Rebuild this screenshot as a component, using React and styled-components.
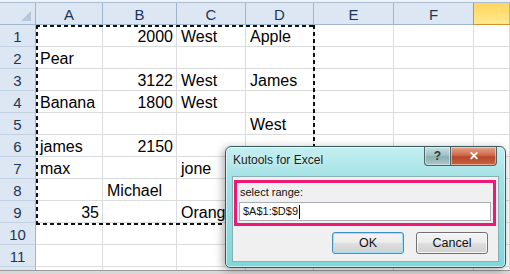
import React from 'react';
import styled, { createGlobalStyle } from 'styled-components';

const GlobalStyle = createGlobalStyle`
  html, body {
    margin: 0;
    padding: 0;
    background: #fff;
  }
`;

const COLS = [
  { key: 'A', width: 67 },
  { key: 'B', width: 74 },
  { key: 'C', width: 69 },
  { key: 'D', width: 68 },
  { key: 'E', width: 80 },
  { key: 'F', width: 80 },
  { key: 'G', width: 36, selected: true },
];

// cell values, right aligned when numeric
const DATA = {
  1: { B: '2000', C: 'West', D: 'Apple' },
  2: { A: 'Pear' },
  3: { B: '3122', C: 'West', D: 'James' },
  4: { A: 'Banana', B: '1800', C: 'West' },
  5: { D: 'West' },
  6: { A: 'james', B: '2150' },
  7: { A: 'max', C: 'jone' },
  8: { B: 'Michael' },
  9: { A: '35', C: 'Orange' },
};

const Page = styled.div`
  position: relative;
  width: 510px;
  height: 274px;
  overflow: hidden;
  background: #fff;
  font-family: "Liberation Sans", Arial, sans-serif;
`;

const Sheet = styled.div`
  position: relative;
  height: 270px;
  overflow: hidden;
  border-bottom: 1px solid #9a9a9a;
`;

const TopStrip = styled.div`
  height: 2px;
  background: #eef1f5;
  border-bottom: 1px solid #a9bdd3;
`;

const Grid = styled.div`
  display: grid;
  grid-template-columns: 36px ${COLS.map((c) => c.width + 'px').join(' ')};
  grid-auto-rows: 22px;
`;

const Corner = styled.div`
  position: relative;
  background: #dde7f3;
  border-right: 1px solid #9eb6ce;
  border-bottom: 1px solid #9eb6ce;
  &::after {
    content: '';
    position: absolute;
    right: 4px;
    bottom: 3px;
    border-left: 10px solid transparent;
    border-bottom: 10px solid #b7c7da;
  }
`;

const ColHeader = styled.div`
  display: flex;
  align-items: center;
  justify-content: center;
  font-size: 15px;
  color: #1c3656;
  background: ${(p) => (p.$selected ? 'linear-gradient(#ffd560, #ffe98e)' : '#dde7f3')};
  border-right: 1px solid #9eb6ce;
  border-bottom: 1px solid ${(p) => (p.$selected ? '#d8902c' : '#9eb6ce')};
  ${(p) => p.$selected && 'border-left: 1px solid #d8902c; margin-left: -1px;'}
  box-sizing: border-box;
  padding-top: 1px;
`;

const RowHeader = styled.div`
  display: flex;
  align-items: center;
  justify-content: center;
  font-size: 15px;
  color: #1c3656;
  background: #dde7f3;
  border-right: 1px solid #9eb6ce;
  border-bottom: 1px solid #c3d2e3;
  box-sizing: border-box;
  padding-top: 2px;
`;

const Cell = styled.div`
  box-sizing: border-box;
  border-right: 1px solid #dadcdd;
  border-bottom: 1px solid #dadcdd;
  font-size: 16px;
  line-height: 20px;
  padding: 2px 3px 0 4px;
  color: #000;
  white-space: nowrap;
  text-align: ${(p) => (p.$numeric ? 'right' : 'left')};
  overflow: visible;
`;

const Selection = styled.div`
  position: absolute;
  left: 36px;
  top: 25px;
  width: 279px;
  height: 200px;
  pointer-events: none;
  background:
    repeating-linear-gradient(90deg, #111 0 4px, transparent 4px 7px) top left / 100% 2px no-repeat,
    repeating-linear-gradient(90deg, #111 0 4px, transparent 4px 7px) bottom left / 100% 2px no-repeat,
    repeating-linear-gradient(180deg, #111 0 4px, transparent 4px 7px) top left / 2px 100% no-repeat,
    repeating-linear-gradient(180deg, #111 0 4px, transparent 4px 7px) top right / 2px 100% no-repeat;
`;

const BottomBand = styled.div`
  height: 3px;
  background: #d8d8d8;
`;

/* dialog */

const Dialog = styled.div`
  position: absolute;
  left: 225px;
  top: 146px;
  width: 281px;
  height: 122px;
  box-sizing: border-box;
  display: flex;
  flex-direction: column;
  border: 1px solid #37595d;
  border-radius: 6px 6px 5px 5px;
  background: linear-gradient(180deg, #c4eff1 0%, #a4e2e5 25%, #7fd6d9 100%);
  box-shadow: inset 0 0 0 1px rgba(255, 255, 255, 0.55), -2px 2px 8px rgba(0, 0, 0, 0.35);
  font-family: "Liberation Sans", Arial, sans-serif;
`;

const TitleBar = styled.div`
  height: 29px;
  display: flex;
  align-items: flex-start;
  padding: 0 8px 0 7px;
`;

const Title = styled.div`
  flex: 1;
  font-size: 12px;
  color: #1b1b1b;
  padding-top: 6px;
  text-shadow: 0 0 6px rgba(255, 255, 255, 0.9);
`;

const CaptionButton = styled.div`
  height: 19px;
  width: ${(p) => (p.$close ? '46px' : '27px')};
  box-sizing: border-box;
  display: flex;
  align-items: center;
  justify-content: center;
  border: 1px solid #4c6467;
  border-top: none;
  ${(p) => (p.$close ? 'border-left: none;' : '')}
  border-radius: ${(p) => (p.$close ? '0 0 4px 0' : '0 0 0 4px')};
  background: ${(p) =>
    p.$close
      ? 'linear-gradient(180deg, #e6a48c 0%, #d06a4c 45%, #b8472b 55%, #c9643f 100%)'
      : 'linear-gradient(180deg, #c9dfe1 0%, #a3c2c5 45%, #8eb0b3 55%, #a9c7ca 100%)'};
  box-shadow: inset 0 0 0 1px rgba(255, 255, 255, 0.45);
  color: ${(p) => (p.$close ? '#fff' : '#2a3b3d')};
  font-size: 12px;
  font-weight: bold;
`;

const Panel = styled.div`
  flex: 1;
  margin: 0 6px 5px 6px;
  background: #f0f0f0;
  border: 1px solid #8aaeb1;
  display: flex;
  flex-direction: column;
  padding: 3px 2px 0 1px;
`;

const Highlight = styled.div`
  border: 3px solid #ec1a72;
  padding: 0 2px 2px 2px;
  display: flex;
  flex-direction: column;
`;

const Label = styled.div`
  font-size: 11px;
  color: #111;
  height: 19px;
  line-height: 19px;
  padding-left: 1px;
`;

const Input = styled.div`
  height: 19px;
  box-sizing: border-box;
  border: 1px solid #abadb3;
  background: #fff;
  font-size: 11px;
  line-height: 17px;
  padding-left: 3px;
  color: #111;
  display: flex;
  align-items: center;
`;

const Caret = styled.span`
  display: inline-block;
  width: 1px;
  height: 14px;
  background: #000;
  margin-left: 1px;
`;

const Buttons = styled.div`
  display: flex;
  justify-content: flex-end;
  gap: 12px;
  margin-top: 6px;
  padding-right: 8px;
`;

const Button = styled.div`
  width: 72px;
  height: 22px;
  box-sizing: border-box;
  display: flex;
  align-items: center;
  justify-content: center;
  font-size: 12.5px;
  color: #111;
  border-radius: 3px;
  border: 1px solid ${(p) => (p.$default ? '#3c8fc8' : '#707070')};
  background: linear-gradient(180deg, #f4f4f4 0%, #ececec 48%, #dedede 52%, #d0d0d0 100%);
  box-shadow: inset 0 0 0 1px ${(p) => (p.$default ? '#9fe2fb' : 'rgba(255,255,255,0.8)')};
`;

function App() {
  const rows = Array.from({ length: 12 }, (_, i) => i + 1);
  return (
    <Page>
      <GlobalStyle />
      <Sheet>
        <TopStrip />
        <Grid>
          <Corner />
          {COLS.map((c) => (
            <ColHeader key={c.key} $selected={c.selected}>
              {c.selected ? '' : c.key}
            </ColHeader>
          ))}
          {rows.map((r) => (
            <React.Fragment key={r}>
              <RowHeader>{r}</RowHeader>
              {COLS.map((c) => {
                const v = DATA[r]?.[c.key];
                return (
                  <Cell key={c.key} $numeric={v && /^\d+$/.test(v)}>
                    {v}
                  </Cell>
                );
              })}
            </React.Fragment>
          ))}
        </Grid>
        <Selection />
      </Sheet>
      <BottomBand />

      <Dialog>
        <TitleBar>
          <Title>Kutools for Excel</Title>
          <CaptionButton>?</CaptionButton>
          <CaptionButton $close>✕</CaptionButton>
        </TitleBar>
        <Panel>
          <Highlight>
            <Label>select range:</Label>
            <Input>
              $A$1:$D$9<Caret />
            </Input>
          </Highlight>
          <Buttons>
            <Button $default>OK</Button>
            <Button>Cancel</Button>
          </Buttons>
        </Panel>
      </Dialog>
    </Page>
  );
}

export default App;
